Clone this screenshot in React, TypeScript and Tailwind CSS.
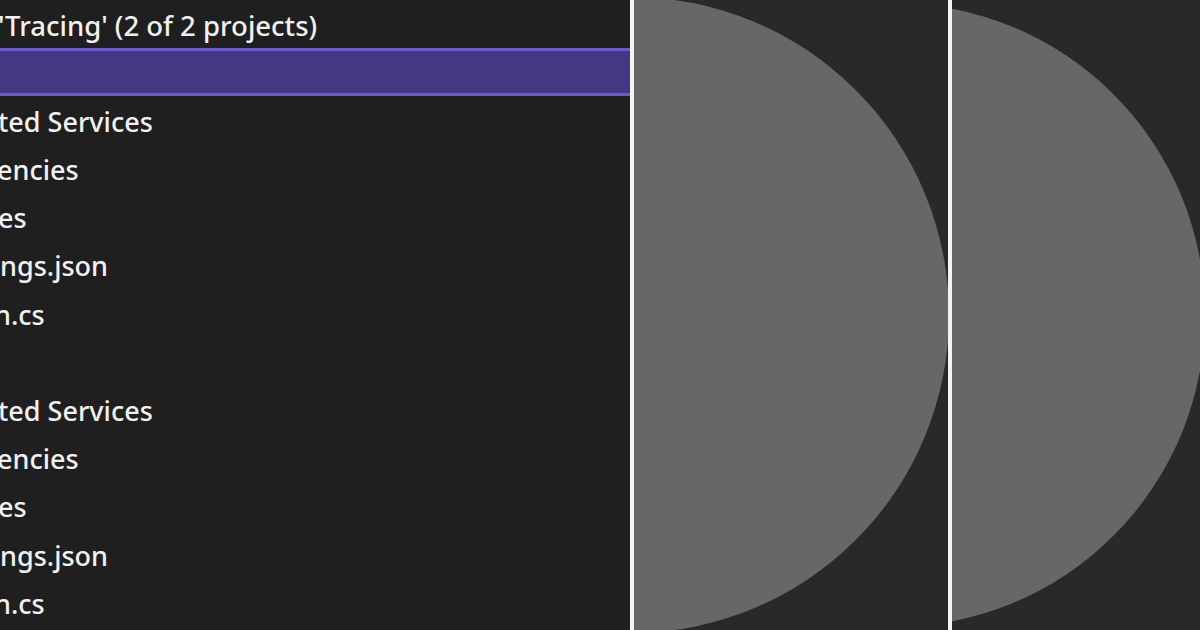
const rowsA = [
  { text: "ted Services", shift: "-ml-[2px]" },
  { text: "encies", shift: "-ml-[3px]" },
  { text: "es", shift: "-ml-[2px]" },
  { text: "ngs.json", shift: "ml-0" },
  { text: "n.cs", shift: "-ml-[6px]" },
];

function TreeRow({ text, shift }: { text: string; shift: string }) {
  return (
    <div className="flex h-[48.2px] items-center whitespace-nowrap pt-[4px] text-[27px] font-medium text-[#f1f1f1]">
      <span className={shift}>{text}</span>
    </div>
  );
}

export default function App() {
  return (
    <div
      className="flex h-[630px] w-[1200px] overflow-hidden bg-[#1f1f1f]"
      style={{ fontFamily: '"Noto Sans", "Open Sans", sans-serif' }}
    >
      {/* Solution explorer, cropped */}
      <div className="flex w-[630px] shrink-0 flex-col overflow-hidden bg-[#1f1f1f]">
        <div className="flex h-[48px] items-center whitespace-nowrap pt-[4px] text-[27.5px] font-medium text-[#f1f1f1]">
          <span className="-ml-[2px]">'Tracing' (2 of 2 projects)</span>
        </div>
        <div className="h-[48px] border-y-[3px] border-[#6b5bd0] bg-[#433883]" />
        {rowsA.map((r) => (
          <TreeRow key={"a" + r.text} text={r.text} shift={r.shift} />
        ))}
        <div className="h-[48.2px]" />
        {rowsA.map((r) => (
          <TreeRow key={"b" + r.text} text={r.text} shift={r.shift} />
        ))}
      </div>

      <div className="w-[4px] shrink-0 bg-[#f4f4f4]" />

      <div className="relative w-[314px] shrink-0 overflow-hidden bg-[#292929]">
        <div className="absolute left-[-321px] top-1/2 h-[636px] w-[636px] -translate-y-1/2 rounded-full bg-[#676767]" />
      </div>

      <div className="w-[4px] shrink-0 bg-[#f4f4f4]" />

      <div className="relative flex-1 overflow-hidden bg-[#292929]">
        <div className="absolute left-[-371px] top-1/2 h-[624px] w-[624px] -translate-y-1/2 rounded-full bg-[#676767]" />
      </div>
    </div>
  );
}
